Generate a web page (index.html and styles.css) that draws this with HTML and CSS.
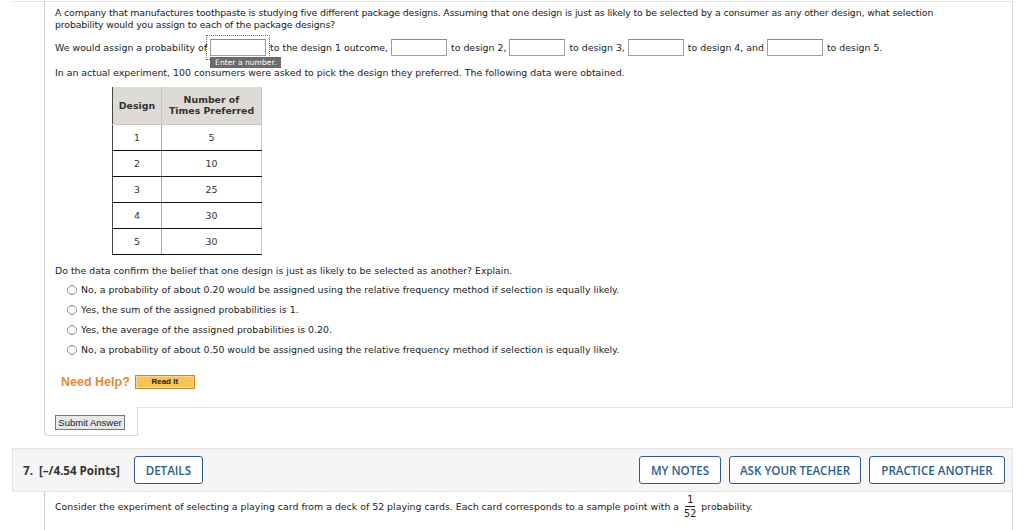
FILE: index.html
```html
<!DOCTYPE html>
<html>
<head>
<meta charset="utf-8">
<link rel="stylesheet" href="styles.css">
</head>
<body>
<div class="page">
  <div class="q6-top"></div>
  <div class="panel">
    <p class="text intro">A company that manufactures toothpaste is studying five different package designs. Assuming that one design is just as likely to be selected by a consumer as any other design, what selection probability would you assign to each of the package designs?</p>
    <div class="inputs-row">
      <span>We would assign a probability of</span>
      <span class="focus-wrap"><span class="field"></span><span class="tooltip">Enter a number.</span></span>
      <span>to the design 1 outcome,</span>
      <span class="field"></span>
      <span>to design 2,</span>
      <span class="field"></span>
      <span>to design 3,</span>
      <span class="field"></span>
      <span>to design 4, and</span>
      <span class="field"></span>
      <span>to design 5.</span>
    </div>
    <p class="text exp">In an actual experiment, 100 consumers were asked to pick the design they preferred. The following data were obtained.</p>
    <table class="data">
      <thead>
        <tr><th class="c1">Design</th><th class="c2">Number of<br>Times Preferred</th></tr>
      </thead>
      <tbody>
        <tr><td>1</td><td>5</td></tr>
        <tr><td>2</td><td>10</td></tr>
        <tr><td>3</td><td>25</td></tr>
        <tr><td>4</td><td>30</td></tr>
        <tr><td>5</td><td>30</td></tr>
      </tbody>
    </table>
    <p class="text q">Do the data confirm the belief that one design is just as likely to be selected as another? Explain.</p>
    <ul class="options">
      <li><span class="radio"></span>No, a probability of about 0.20 would be assigned using the relative frequency method if selection is equally likely.</li>
      <li><span class="radio"></span>Yes, the sum of the assigned probabilities is 1.</li>
      <li><span class="radio"></span>Yes, the average of the assigned probabilities is 0.20.</li>
      <li><span class="radio"></span>No, a probability of about 0.50 would be assigned using the relative frequency method if selection is equally likely.</li>
    </ul>
    <div class="help">
      <span class="need">Need Help?</span>
      <span class="readit">Read It</span>
    </div>
  </div>
  <div class="footer">
    <div class="tab"><span class="submit">Submit Answer</span></div>
    <div class="rest"></div>
  </div>

  <div class="q7-head">
    <span class="points">7.&nbsp; [–/4.54 Points]</span>
    <span class="btn details">DETAILS</span>
    <span class="spacer"></span>
    <span class="btn notes">MY NOTES</span>
    <span class="btn ask">ASK YOUR TEACHER</span>
    <span class="btn practice">PRACTICE ANOTHER</span>
  </div>
  <div class="panel q7">
    <p class="text card">Consider the experiment of selecting a playing card from a deck of 52 playing cards. Each card corresponds to a sample point with a <span class="frac"><span class="num">1</span><span class="den">52</span></span> probability.</p>
  </div>
</div>
</body>
</html>
```

FILE: styles.css
```css
* { box-sizing: border-box; }
html, body { margin: 0; padding: 0; background: #fff; }
body {
  font-family: "DejaVu Sans", Verdana, sans-serif;
  font-size: 9.4px;
  color: #222;
  overflow: hidden;
}
.page { width: 1001px; margin-left: 12px; }
.q6-top { height: 2px; border-top: 1px solid #e2e2e2; margin-top: 1px; }
.panel {
  margin-left: 32px;
  border-left: 1px solid #d0d0d0;
  border-right: 1px solid #d8d8d8;
  padding: 6px 0 0 10px;
  height: 406px;
  margin-top: -2px;
}
.text { margin: 0; line-height: 12px; width: 940px; }
.intro { letter-spacing: -0.15px; width: 905px; }
.inputs-row {
  display: flex;
  align-items: center;
  height: 20px;
  margin-top: 6px;
  white-space: nowrap;
}
.field {
  display: inline-block;
  width: 56px;
  height: 17px;
  border: 1px solid #a0a0a0;
  border-top-color: #8a8a8a;
  background: #fff;
}
.inputs-row > .field, .inputs-row > .focus-wrap { margin: 0 4px 0 3px; }
.focus-wrap { position: relative; display: inline-flex; }
.focus-wrap::before {
  content: "";
  position: absolute;
  left: -4px; top: -4px; right: -4px; bottom: -4px;
  border: 1px dotted #3a78d4;
}
.tooltip {
  position: absolute;
  left: 0; top: 18px;
  background: #6b6b6b;
  color: #fff;
  font-size: 7.6px;
  line-height: 11px;
  padding: 0 5px;
  white-space: nowrap;
  z-index: 2;
}
.exp { margin-top: 10px; }
.data {
  border-collapse: collapse;
  margin: 8px 0 0 57px;
  color: #333;
  font-size: 9.4px;
}
.data th {
  background: #dedbd6;
  font-weight: bold;
  height: 37px;
  line-height: 11px;
  border-left: 1px solid #999;
  border-bottom: 1px solid #c8c8c8;
  border-right: 1px solid #c8c8c8;
  padding: 0;
}
.data th.c1 { width: 49px; border-left: 1px solid #444; }
.data th.c2 { width: 100px; }
.data td {
  text-align: center;
  height: 26px;
  border-bottom: 1px solid #111;
  border-right: 1px solid #aaa;
  padding: 0;
}
.data td:first-child { border-left: 1px solid #444; }
.data td:last-child { border-right: 1px solid #c8c8c8; }
.q { margin-top: 10px; }
.options { list-style: none; margin: 3px 0 0 12px; padding: 0; }
.options li {
  display: flex;
  align-items: center;
  height: 20px;
}
.radio {
  width: 10px; height: 10px;
  border: 1px solid #8a8a8a;
  border-radius: 50%;
  margin-right: 4px;
  background: #fff;
}
.help {
  display: flex;
  align-items: center;
  margin: 14px 0 0 6px;
  height: 16px;
}
.need {
  font-family: "Liberation Sans", Arial, sans-serif;
  font-weight: bold;
  font-size: 12.5px;
  color: #e8893a;
  margin-right: 5px;
}
.readit {
  display: inline-flex;
  align-items: center;
  justify-content: center;
  width: 60px; height: 14px;
  background: #f5c35b;
  border: 1px solid #c9852a;
  box-shadow: inset 0 0 0 1px #f9d98c;
  font-family: "Liberation Sans", Arial, sans-serif;
  font-weight: bold;
  font-size: 8px;
  color: #222;
}
.footer { display: flex; height: 29px; }
.tab {
  width: 94px;
  margin-left: 32px;
  border-left: 1px solid #d0d0d0;
  border-right: 1px solid #d8d8d8;
  border-bottom: 1px solid #d8d8d8;
  border-bottom-left-radius: 4px;
  padding: 8px 0 0 10px;
}
.submit {
  display: inline-flex;
  align-items: center;
  justify-content: center;
  width: 70px; height: 15px;
  background: #e8e8e8;
  border: 1px solid #777;
  font-family: "Liberation Sans", Arial, sans-serif;
  font-size: 9.5px;
  color: #222;
}
.rest { border-top: 1px solid #e2e2e2; width: 875px; flex: none; }
.q7-head {
  margin-top: 12px;
  height: 44px;
  border: 1px solid #e4e4e4;
  background: #f5f5f5;
  display: flex;
  align-items: center;
  padding: 0 7px 0 10px;
  font-family: "Open Sans", sans-serif;
}
.points { font-weight: bold; font-size: 11.6px; color: #333; margin-right: 14px; }
.btn {
  display: inline-flex;
  align-items: center;
  justify-content: center;
  height: 28px;
  padding: 0;
  border: 1px solid #2c5d92;
  border-radius: 3px;
  background: #fff;
  color: #2c5d92;
  font-weight: 600;
  font-size: 11.6px;
  margin-left: 8px;
}
.btn.details { margin-left: 0; width: 69px; }
.btn.notes { width: 82px; }
.btn.ask { width: 132px; }
.btn.practice { width: 136px; }
.spacer { flex: 1; }
.q7 { height: 60px; margin-top: 0; padding-top: 3px; }
.card { line-height: 22px; }
.frac {
  display: inline-flex;
  flex-direction: column;
  align-items: center;
  vertical-align: middle;
  font-size: 9.6px;
  line-height: 11px;
  margin: 0 2px;
  position: relative;
  top: -1px;
}
.frac .num { border-bottom: 1px solid #222; padding: 0 2px 1px; }
.frac .den { padding-top: 1px; }
```
